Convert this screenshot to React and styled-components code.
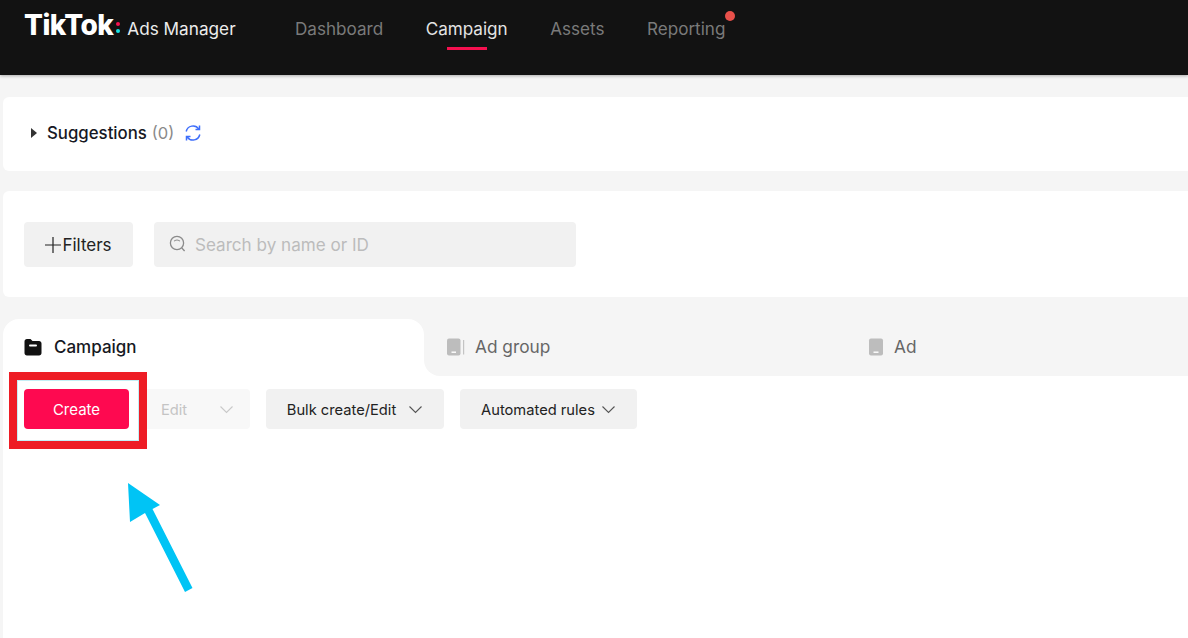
import styled, { createGlobalStyle } from 'styled-components';

const GlobalStyle = createGlobalStyle`
  html, body {
    margin: 0;
    height: 100%;
    overflow: hidden;
    background: #f5f5f5;
  }
  * {
    box-sizing: border-box;
  }
  #root {
    height: 100%;
  }
`;

const navItems = ['Dashboard', 'Campaign', 'Assets', 'Reporting'];

function Chevron({ color = '#555' }) {
  return (
    <svg width="15" height="15" viewBox="0 0 15 15" fill="none">
      <polyline points="1.5,4.5 7.5,10.5 13.5,4.5" stroke={color} strokeWidth="1.1" />
    </svg>
  );
}

function FolderIcon() {
  return (
    <svg width="18" height="18" viewBox="0 0 18 18">
      <path
        d="M0.5 3.5C0.5 2 1.5 1 3 1H6.5L8.5 3H15C16.5 3 17.5 4 17.5 5.5V15C17.5 16.5 16.5 17.5 15 17.5H3C1.5 17.5 0.5 16.5 0.5 15Z"
        fill="#111"
      />
      <rect x="5" y="6.5" width="8" height="2" rx="1" fill="#fff" />
    </svg>
  );
}

function AdGroupIcon() {
  return (
    <svg width="18" height="18" viewBox="0 0 18 18">
      <rect x="0" y="0.5" width="13.5" height="17" rx="2" fill="#bdbdbd" />
      <rect x="4.5" y="13.5" width="4.5" height="1.4" fill="#fff" />
      <rect x="16" y="2" width="1.2" height="14.5" fill="#c4c4c4" />
    </svg>
  );
}

function AdIcon() {
  return (
    <svg width="16" height="18" viewBox="0 0 16 18">
      <rect x="1" y="0.5" width="14" height="17" rx="2" fill="#bdbdbd" />
      <rect x="5.5" y="13.5" width="5" height="1.4" fill="#fff" />
    </svg>
  );
}

export default function App() {
  return (
    <Page>
      <GlobalStyle />
      <Header>
        <Logo>
          <LogoMark>TikTok</LogoMark>
          <LogoDots>
            <LogoDot color="#f5104f" />
            <LogoDot color="#17e3e3" />
          </LogoDots>
          <LogoText>Ads Manager</LogoText>
        </Logo>
        <Nav>
          {navItems.map((item) => (
            <NavItem key={item} active={item === 'Campaign'}>
              {item}
              {item === 'Reporting' && <NavDot />}
            </NavItem>
          ))}
        </Nav>
      </Header>

      <Main>
        <SuggestionsPanel>
          <Caret />
          <SuggestionsTitle>Suggestions</SuggestionsTitle>
          <SuggestionsCount>(0)</SuggestionsCount>
          <svg width="18" height="18" viewBox="0 0 18 18" fill="none">
            <path d="M2.2 7.5A7 7 0 0 1 14.8 5" stroke="#3f6ffb" strokeWidth="1.5" />
            <path d="M15.8 10.5A7 7 0 0 1 3.2 13" stroke="#3f6ffb" strokeWidth="1.5" />
            <path d="M15.5 1.5V5.5H11.5" stroke="#3f6ffb" strokeWidth="1.5" />
            <path d="M2.5 16.5V12.5H6.5" stroke="#3f6ffb" strokeWidth="1.5" />
          </svg>
        </SuggestionsPanel>

        <FilterPanel>
          <FilterButton>
            <svg width="16" height="16" viewBox="0 0 16 16">
              <path d="M8 0V16M0 8H16" stroke="#222" strokeWidth="1.2" />
            </svg>
            Filters
          </FilterButton>
          <SearchBox>
            <svg width="17" height="18" viewBox="0 0 17 18" fill="none">
              <circle cx="8" cy="8" r="6.6" stroke="#8b8b8b" strokeWidth="1.3" />
              <path d="M5.2 6.2C6 4.6 10 4.6 10.8 6.2" stroke="#8b8b8b" strokeWidth="1.1" />
              <path d="M12.8 13L15.6 16" stroke="#8b8b8b" strokeWidth="1.3" />
            </svg>
            <SearchText>Search by name or ID</SearchText>
          </SearchBox>
        </FilterPanel>

        <TabRow>
          <Tab active>
            <FolderIcon />
            Campaign
          </Tab>
          <RestTabs>
            <Tab>
              <AdGroupIcon />
              Ad group
            </Tab>
            <Tab>
              <AdIcon />
              Ad
            </Tab>
          </RestTabs>
        </TabRow>

        <Content>
          <CreateButton>Create</CreateButton>
          <ActionButton disabled width="105px" gap="32px">
            Edit
            <Chevron color="#c9c9c9" />
          </ActionButton>
          <ActionButton width="178px" gap="12px">
            Bulk create/Edit
            <Chevron />
          </ActionButton>
          <ActionButton width="177px" gap="6px">
            Automated rules
            <Chevron />
          </ActionButton>
        </Content>
      </Main>

      <Highlight />
      <Arrow width="80" height="120" viewBox="0 0 80 120">
        <polygon
          points="8,3 10,42 25,33 65,112 72.5,108 32.5,29 40,25"
          fill="#00c4f5"
        />
      </Arrow>
    </Page>
  );
}

const Page = styled.div`
  position: relative;
  width: 1188px;
  height: 638px;
  overflow: hidden;
  display: flex;
  flex-direction: column;
  background: #f5f5f5;
  font-family: 'Inter', 'Liberation Sans', sans-serif;
  color: #161823;
`;

const Header = styled.header`
  height: 75px;
  flex-shrink: 0;
  display: flex;
  align-items: flex-start;
  padding: 14px 0 0 24px;
  background: #121212;
  box-shadow: 0 1px 3px rgba(0, 0, 0, 0.3);
`;

const Logo = styled.div`
  display: flex;
  align-items: center;
  width: 271px;
  height: 30px;
  color: #fff;
`;

const LogoMark = styled.span`
  font-size: 28px;
  font-weight: 800;
  letter-spacing: -0.55px;
  line-height: 26px;
  margin-top: -8px;
`;

const LogoDots = styled.span`
  display: flex;
  flex-direction: column;
  gap: 3px;
  margin: -3px 7px 0 3px;
`;

const LogoDot = styled.i`
  width: 4px;
  height: 4px;
  border-radius: 50%;
  background: ${({ color }) => color};
`;

const LogoText = styled.span`
  font-size: 17.2px;
  line-height: 20px;
  margin-top: -1px;
  color: #ececec;
`;

const Nav = styled.nav`
  display: flex;
  gap: 42.5px;
`;

const NavItem = styled.div`
  position: relative;
  font-size: 17.1px;
  line-height: 30px;
  color: ${({ active }) => (active ? '#e4e4e4' : '#7a7a7a')};

  ${({ active }) =>
    active &&
    `&::after {
      content: '';
      position: absolute;
      left: 21px;
      bottom: -6px;
      width: 40px;
      height: 3px;
      background: #f5104f;
    }`}
`;

const NavDot = styled.span`
  position: absolute;
  top: -3px;
  right: -10px;
  width: 10px;
  height: 10px;
  border-radius: 50%;
  background: #e8504a;
`;

const Main = styled.main`
  flex: 1;
  display: flex;
  flex-direction: column;
  padding: 22px 0 0 3px;
`;

const SuggestionsPanel = styled.section`
  height: 74px;
  display: flex;
  align-items: center;
  padding: 0 0 2px 28px;
  background: #fff;
  border-radius: 6px 0 0 6px;
`;

const Caret = styled.span`
  width: 0;
  height: 0;
  margin-right: 10px;
  border-top: 5px solid transparent;
  border-bottom: 5px solid transparent;
  border-left: 6px solid #333;
`;

const SuggestionsTitle = styled.span`
  font-size: 16.8px;
  font-weight: 500;
  margin-right: 5px;
`;

const SuggestionsCount = styled.span`
  font-size: 16.5px;
  color: #8a8a8a;
  margin-right: 10px;
`;

const FilterPanel = styled.section`
  height: 106px;
  margin-top: 20px;
  display: flex;
  gap: 21px;
  padding: 31px 21px;
  background: #fff;
  border-radius: 6px 0 0 6px;
`;

const FilterButton = styled.button`
  width: 109px;
  height: 45px;
  display: flex;
  align-items: center;
  justify-content: center;
  gap: 1px;
  padding: 0;
  border: 0;
  border-radius: 4px;
  background: #f1f1f1;
  font: inherit;
  font-size: 17px;
  color: #222;
`;

const SearchBox = styled.div`
  width: 422px;
  height: 45px;
  display: flex;
  align-items: center;
  gap: 9px;
  padding: 0 0 1px 15px;
  border-radius: 4px;
  background: #f1f1f1;
`;

const SearchText = styled.span`
  font-size: 17.1px;
  color: #bcbcbc;
`;

const TabRow = styled.div`
  height: 57px;
  flex-shrink: 0;
  margin-top: 22px;
  display: flex;
  background: #f5f5f5;
`;

const RestTabs = styled.div`
  flex: 1;
  display: flex;
  background: #f5f5f5;
  border-bottom-left-radius: 16px;
  box-shadow: -16px 16px 0 0 #fff;
  overflow: hidden;
`;

const Tab = styled.div`
  width: 421px;
  flex-shrink: 0;
  display: flex;
  align-items: center;
  gap: ${({ active }) => (active ? '12px' : '10px')};
  padding: 0 0 2px ${({ active }) => (active ? '21px' : '23px')};
  font-size: ${({ active }) => (active ? '17px' : '17.3px')};
  font-weight: ${({ active }) => (active ? 500 : 400)};
  color: ${({ active }) => (active ? '#161823' : '#666')};
  background: ${({ active }) => (active ? '#fff' : 'transparent')};
  border-radius: ${({ active }) => (active ? '16px 16px 0 0' : '0')};
`;

const Content = styled.div`
  flex: 1;
  display: flex;
  align-items: flex-start;
  gap: 16px;
  padding: 13px 0 0 21px;
  background: #fff;
`;

const CreateButton = styled.button`
  width: 105px;
  height: 40px;
  border: 0;
  border-radius: 4px;
  background: #fe0950;
  font: inherit;
  font-size: 15px;
  color: #fff;
`;

const ActionButton = styled.button`
  width: ${({ width }) => width};
  height: 40px;
  display: flex;
  align-items: center;
  justify-content: center;
  gap: ${({ gap }) => gap};
  padding: 1px 0 0;
  border: 0;
  border-radius: 4px;
  background: ${({ disabled }) => (disabled ? '#f8f8f8' : '#f1f1f1')};
  font: inherit;
  font-size: 14.7px;
  color: ${({ disabled }) => (disabled ? '#c4c4c4' : '#222')};
`;

const Highlight = styled.div`
  position: absolute;
  left: 9px;
  top: 372px;
  width: 138px;
  height: 77px;
  border: 8px solid #ee1c25;
  box-shadow: inset 0 0 0 1px #c4eef5;
`;

const Arrow = styled.svg`
  position: absolute;
  left: 120px;
  top: 480px;
`;
